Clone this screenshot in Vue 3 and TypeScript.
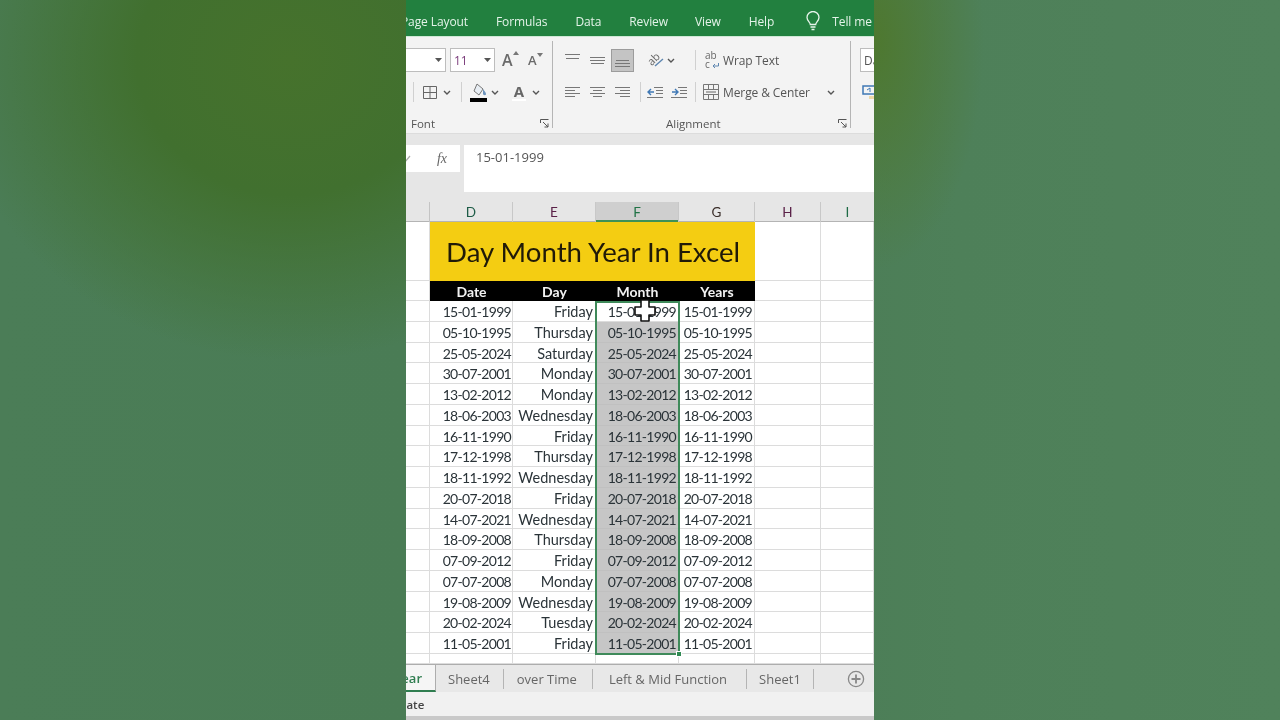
<script setup lang="ts">
interface Row { date: string; day: string }
const rows: Row[] = [
  { date: '15-01-1999', day: 'Friday' },
  { date: '05-10-1995', day: 'Thursday' },
  { date: '25-05-2024', day: 'Saturday' },
  { date: '30-07-2001', day: 'Monday' },
  { date: '13-02-2012', day: 'Monday' },
  { date: '18-06-2003', day: 'Wednesday' },
  { date: '16-11-1990', day: 'Friday' },
  { date: '17-12-1998', day: 'Thursday' },
  { date: '18-11-1992', day: 'Wednesday' },
  { date: '20-07-2018', day: 'Friday' },
  { date: '14-07-2021', day: 'Wednesday' },
  { date: '18-09-2008', day: 'Thursday' },
  { date: '07-09-2012', day: 'Friday' },
  { date: '07-07-2008', day: 'Monday' },
  { date: '19-08-2009', day: 'Wednesday' },
  { date: '20-02-2024', day: 'Tuesday' },
  { date: '11-05-2001', day: 'Friday' },
]
const tabs = ['Formulas', 'Data', 'Review', 'View', 'Help']
const cols = [
  { name: 'D', cls: 'hd' },
  { name: 'E', cls: 'he' },
  { name: 'F', cls: 'hf' },
  { name: 'G', cls: 'hg' },
  { name: 'H', cls: 'hh' },
  { name: 'I', cls: 'hi' },
]
</script>

<template>
  <div class="page">
    <div class="screen">
      <div class="tabs">
        <span class="tab first">Page Layout</span>
        <span v-for="t in tabs" :key="t" class="tab" :class="'tab-' + t">{{ t }}</span>
        <svg class="bulb" width="16" height="20" viewBox="0 0 16 20" fill="none" stroke="#e6f4ea" stroke-width="1.3">
          <path d="M5.3 13.5c0-2-3.3-3.6-3.3-7a6 6 0 0 1 12 0c0 3.4-3.3 5-3.3 7z" />
          <path d="M5.5 16h5M6.5 18.5h3" />
        </svg>
        <span class="tab tell">Tell me</span>
      </div>

      <div class="ribbon">
        <div class="group font-group">
          <div class="row">
            <div class="box fname"><svg class="caret" width="7" height="4" viewBox="0 0 7 4"><path d="M0 0h7L3.500 4z" fill="#555" /></svg></div>
            <div class="box fsize"><span class="sizeval">11</span><svg class="caret" width="7" height="4" viewBox="0 0 7 4"><path d="M0 0h7L3.500 4z" fill="#555" /></svg></div>
            <span class="grow-a">A<svg class="mini" width="6" height="4" viewBox="0 0 6 4"><path d="M0 4l3-4 3 4z" fill="#777" /></svg></span>
            <span class="shrink-a">A<svg class="mini" width="6" height="4" viewBox="0 0 6 4"><path d="M0 0h6L3 4z" fill="#777" /></svg></span>
          </div>
          <div class="row">
            <i class="vsep s1"></i>
            <svg class="borders" width="16" height="15" viewBox="0 0 16 15" fill="none" stroke="#666"><path d="M1.500 1.500h13v12h-13zM8 1.500v12M1.500 7.500h13" /></svg>
            <svg class="chev c1" width="8" height="5" viewBox="0 0 8 5" fill="none" stroke="#555" stroke-width="1.400"><path d="M1 1l3 3 3-3" /></svg>
            <i class="vsep s2"></i>
            <svg class="fill-ic" width="17" height="19" viewBox="0 0 17 19">
              <path d="M7 1l6 5-4 6-5-4z" fill="#e8eef4" stroke="#777" />
              <path d="M13 6c1 2 3 3 3 5s-3 1-3 0z" fill="#6d94bd" />
              <rect x="0" y="15" width="17" height="4" fill="#000" />
            </svg>
            <svg class="chev c2" width="8" height="5" viewBox="0 0 8 5" fill="none" stroke="#555" stroke-width="1.400"><path d="M1 1l3 3 3-3" /></svg>
            <span class="color-a">A</span>
            <svg class="chev c3" width="8" height="5" viewBox="0 0 8 5" fill="none" stroke="#555" stroke-width="1.400"><path d="M1 1l3 3 3-3" /></svg>
          </div>
          <div class="label">
            <span class="font-label">Font</span>
            <svg class="launch" width="9" height="9" viewBox="0 0 9 9" fill="none" stroke="#555"><path d="M.5 4V.5H8.500M3 3l5 5M8 4.500V8H4.500" /></svg>
          </div>
        </div>

        <div class="group align-group">
          <div class="row">
            <svg class="a1" width="15" height="15" viewBox="0 0 15 15" stroke="#777" fill="none"><path d="M0 1.500h15M1 5.500h13" /></svg>
            <svg class="a2" width="15" height="15" viewBox="0 0 15 15" stroke="#777" fill="none"><path d="M0 4.500h15M0 7.500h15M1 10.500h13" /></svg>
            <div class="pressed"><svg width="15" height="11" viewBox="0 0 15 11" stroke="#777" fill="none"><path d="M1 2.500h13M0 5.500h15M0 8.500h15" /></svg></div>
            <div class="orient">
              <span class="orient-text">ab</span>
              <svg class="orient-line" width="18" height="16" viewBox="0 0 18 16" fill="none"><path d="M9 14l8-7" stroke="#5e86b0" stroke-width="1.400" /></svg>
            </div>
            <svg class="chev c4" width="8" height="5" viewBox="0 0 8 5" fill="none" stroke="#555" stroke-width="1.400"><path d="M1 1l3 3 3-3" /></svg>
            <i class="vsep s3"></i>
            <span class="wrap-ic"><span class="wrap-line">ab</span><span class="wrap-line">c</span>
              <svg class="wrap-arrow" width="7" height="5" viewBox="0 0 7 5" fill="none" stroke="#5e86b0"><path d="M6.500 0v3H1M3 1L1 3l2 2" /></svg>
            </span>
            <span class="rib-text wt">Wrap Text</span>
          </div>
          <div class="row">
            <svg class="a1" width="15" height="13" viewBox="0 0 15 13" stroke="#777" fill="none"><path d="M0 1.500h15M0 4.500h10M0 7.500h15M0 10.500h10" /></svg>
            <svg class="a2" width="15" height="13" viewBox="0 0 15 13" stroke="#777" fill="none"><path d="M0 1.500h15M3 4.500h9M0 7.500h15M3 10.500h9" /></svg>
            <svg class="a3" width="15" height="13" viewBox="0 0 15 13" stroke="#777" fill="none"><path d="M0 1.500h15M5 4.500h10M0 7.500h15M5 10.500h10" /></svg>
            <i class="vsep s4"></i>
            <svg class="ind1" width="16" height="13" viewBox="0 0 16 13" fill="none">
              <path d="M7 1.500h9M9 4.500h7M9 7.500h7M0 11.500h16" stroke="#777" />
              <path d="M7 6H1M4 3L1 6l3 3" stroke="#3f78b5" stroke-width="1.400" />
            </svg>
            <svg class="ind2" width="16" height="13" viewBox="0 0 16 13" fill="none">
              <path d="M7 1.500h9M9 4.500h7M9 7.500h7M0 11.500h16" stroke="#777" />
              <path d="M1 6h6M4 3l3 3-3 3" stroke="#3f78b5" stroke-width="1.400" />
            </svg>
            <i class="vsep s5"></i>
            <svg class="merge" width="16" height="16" viewBox="0 0 16 16" fill="none" stroke="#777"><path d="M.5.500h15v15H.5zM.5 5.500h15M.5 10.500h15M5.500.500v5M10.500.500v5M5.500 10.500v5M10.500 10.500v5" /><path d="M3 8h10" stroke="#666" /></svg>
            <span class="rib-text mc">Merge &amp; Center</span>
            <svg class="chev c5" width="8" height="5" viewBox="0 0 8 5" fill="none" stroke="#555" stroke-width="1.400"><path d="M1 1l3 3 3-3" /></svg>
          </div>
          <div class="label">
            <span class="align-label">Alignment</span>
            <svg class="launch" width="9" height="9" viewBox="0 0 9 9" fill="none" stroke="#555"><path d="M.5 4V.5H8.500M3 3l5 5M8 4.500V8H4.500" /></svg>
          </div>
        </div>

        <div class="group next-group">
          <div class="row"><div class="box nbox">Da</div></div>
          <div class="row">
            <svg class="cond" width="14" height="16" viewBox="0 0 14 16" fill="none">
              <rect x="1" y="2" width="13" height="8" stroke="#3f78b5" stroke-width="1.500" />
              <path d="M5 6l3-2v4" stroke="#3f78b5" />
              <rect x="7" y="12" width="7" height="3" fill="#ecd9a8" />
            </svg>
          </div>
        </div>
      </div>

      <div class="formula">
        <div class="namebox">
          <svg width="5" height="8" viewBox="0 0 5 8" fill="none" stroke="#aaa" stroke-width="1.200"><path d="M-3 5l2 2 5-6" /></svg>
          <span class="fx">fx</span>
        </div>
        <div class="finput">15-01-1999</div>
      </div>

      <div class="colhead">
        <div class="corner"></div>
        <div v-for="c in cols" :key="c.name" class="hcell" :class="c.cls">{{ c.name }}</div>
      </div>

      <div class="grid">
        <div class="cell"></div>
        <div class="title">Day Month Year In Excel</div>
        <div class="cell"></div>
        <div class="cell"></div>

        <div class="cell"></div>
        <div class="th">Date</div>
        <div class="th">Day</div>
        <div class="th">Month</div>
        <div class="th">Years</div>
        <div class="cell"></div>
        <div class="cell"></div>

        <template v-for="(r, i) in rows" :key="r.date + i">
          <div class="cell"></div>
          <div class="cell num date">{{ r.date }}</div>
          <div class="cell num">{{ r.day }}</div>
          <div class="cell num date wide" :class="{ sel: i > 0 }">{{ r.date }}</div>
          <div class="cell num date wide">{{ r.date }}</div>
          <div class="cell"></div>
          <div class="cell"></div>
        </template>

        <div class="cell" v-for="n in 7" :key="'e' + n"></div>

        <div class="selection"><i class="handle"></i></div>
        <svg class="cursor" width="22" height="23" viewBox="0 0 22 23">
          <path d="M7 1h8v7h6v8h-6v6H7v-6H1V8h6z" fill="#fff" stroke="#111" stroke-width="1.600" stroke-linejoin="round" />
        </svg>
      </div>

      <div class="sheets">
        <div class="active-tab">Year</div>
        <span class="st st1">Sheet4</span><i class="tsep t1"></i>
        <span class="st st2">over Time</span><i class="tsep t2"></i>
        <span class="st st3">Left &amp; Mid Function</span><i class="tsep t3"></i>
        <span class="st st4">Sheet1</span><i class="tsep t4"></i>
        <svg class="plus" width="18" height="18" viewBox="0 0 18 18" fill="none" stroke="#888"><circle cx="9" cy="9" r="7.600" stroke-width="1.300" /><path d="M9 4.500v9M4.500 9h9" stroke-width="1.800" /></svg>
      </div>

      <div class="status"><span class="status-text">Date</span></div>
      <div class="foot"></div>
    </div>
  </div>
</template>

<style scoped>
.page {
  width: 1280px;
  height: 720px;
  display: flex;
  justify-content: center;
  overflow: hidden;
  background:
    radial-gradient(ellipse 340px 300px at 290px 60px, #46722c 0%, #41702f 45%, rgba(70, 118, 70, 0) 100%),
    radial-gradient(ellipse 110px 230px at 874px 40px, #4e782f 0%, rgba(78, 128, 88, 0) 100%),
    linear-gradient(90deg, #4b7d57 0%, #4a7c55 32%, #497a54 50%, #4e8059 75%, #50825b 100%);
}
.screen {
  width: 468px;
  height: 720px;
  display: flex;
  flex-direction: column;
  overflow: hidden;
  background: #fff;
  font-family: "Open Sans", "Noto Sans", sans-serif;
  filter: blur(0.4px);
}
.tabs {
  height: 37px;
  flex: none;
  box-sizing: border-box;
  background: #22803f;
  display: flex;
  align-items: center;
  gap: 28px;
  padding-top: 6px;
  color: #e4f3e9;
  font-size: 12px;
  letter-spacing: -0.1px;
  white-space: nowrap;
  border-bottom: 1px solid #cfe8d6;
}
.tab.first { margin-left: -5px; }
.tab-View { margin-left: -1px; }
.bulb { margin-left: 3px; }
.tab.tell { margin-left: -17px; }

.ribbon {
  height: 96px;
  flex: none;
  background: #f3f3f3;
  display: flex;
  padding-top: 4px;
  box-sizing: border-box;
  color: #555;
}
.group { height: 87px; flex: none; box-sizing: border-box; }
.font-group { width: 147px; border-right: 1px solid #b5b5b5; }
.align-group { width: 298px; border-right: 1px solid #b5b5b5; }
.next-group { width: 30px; }
.row { height: 32px; display: flex; align-items: center; position: relative; top: 3px; }
.label {
  display: flex;
  align-items: center;
  height: 14px;
  margin-top: 11px;
  font-size: 11.500px;
  color: #555;
}
.launch { margin-left: auto; margin-right: 3px; }
.font-label { margin-left: 5px; }
.align-label { margin-left: 113px; }

.box {
  height: 24px;
  box-sizing: border-box;
  background: #fff;
  border: 1px solid #bdbdbd;
  display: flex;
  align-items: center;
  font-size: 12px;
}
.caret { margin-left: auto; margin-right: 3px; }
.fname { width: 44px; margin-left: -4px; }
.fsize { width: 45px; margin-left: 4px; padding-left: 3px; }
.sizeval { color: #7a3a7a; }
.grow-a, .shrink-a {
  display: flex;
  align-items: flex-start;
  color: #6a6a6a;
  font-weight: 600;
  line-height: 1;
}
.grow-a { font-size: 16px; margin-left: 7px; width: 18px; }
.shrink-a { font-size: 13px; margin-left: 8px; width: 15px; }
.mini { margin-top: -1px; }
.vsep { display: block; width: 1px; height: 20px; background: #d0d0d0; flex: none; }
.s1 { margin-left: 7px; }
.borders { margin-left: 8px; }
.c1 { margin-left: 5px; }
.s2 { margin-left: 10px; }
.fill-ic { margin-left: 8px; }
.c2 { margin-left: 4px; }
.color-a {
  margin-left: 13px;
  width: 14px;
  font-size: 15px;
  font-weight: 700;
  color: #666;
  text-align: center;
  line-height: 1;
  border-bottom: 2px solid #fff;
}
.c3 { margin-left: 6px; }

.a1 { margin-left: 12px; flex: none; }
.a2 { margin-left: 10px; flex: none; }
.a3 { margin-left: 10px; flex: none; }
.pressed {
  width: 23px;
  height: 23px;
  margin-left: 6px;
  box-sizing: border-box;
  background: #c4c4c4;
  border: 1px solid #9c9c9c;
  display: flex;
  align-items: flex-end;
  justify-content: center;
  padding-bottom: 2px;
}
.orient {
  position: relative;
  margin-left: 12px;
  width: 18px;
  height: 16px;
  display: flex;
  align-items: center;
  justify-content: center;
}
.orient-text {
  font-size: 11px;
  line-height: 12px;
  color: #666;
  transform: translate(-2px, -1px) rotate(-45deg);
}
.orient-line { position: absolute; left: 0; top: 0; }
.c4 { margin-left: 3px; }
.s3 { margin-left: 20px; }
.wrap-ic {
  position: relative;
  margin-left: 9px;
  width: 14px;
  font-size: 10px;
  color: #666;
  display: flex;
  flex-direction: column;
}
.wrap-line { display: block; height: 9px; line-height: 9px; }
.wrap-arrow { position: absolute; right: 0; bottom: 1px; }
.rib-text { font-size: 12px; letter-spacing: -0.1px; color: #555; margin-left: 4px; white-space: nowrap; }
.s4 { margin-left: 10px; }
.ind1 { margin-left: 6px; }
.ind2 { margin-left: 8px; }
.s5 { margin-left: 8px; }
.merge { margin-left: 7px; flex: none; }
.c5 { margin-left: 17px; }
.nbox { margin-left: 9px; width: 40px; padding-left: 3px; }
.cond { margin-left: 11px; }

.formula {
  height: 69px;
  flex: none;
  box-sizing: border-box;
  background: #e6e6e6;
  padding-top: 11px;
  display: flex;
  align-items: flex-start;
  gap: 4px;
  border-top: 1px solid #dcdcdc;
}
.namebox {
  width: 54px;
  height: 27px;
  background: #fff;
  display: flex;
  align-items: center;
  justify-content: space-between;
  padding-right: 13px;
  box-sizing: border-box;
}
.fx {
  font-family: "Liberation Serif", serif;
  font-style: italic;
  font-size: 14px;
  color: #666;
}
.finput {
  flex: 1;
  height: 47px;
  background: #fff;
  box-sizing: border-box;
  padding: 3px 0 0 12px;
  font-size: 13px;
  color: #555;
}

.colhead {
  height: 20px;
  flex: none;
  background: #e6e6e6;
  display: grid;
  grid-template-columns: 24px 83px 83px 83px 76px 66px 53px;
  box-sizing: border-box;
  border-bottom: 1px solid #b4b4b4;
}
.corner { border-right: 1px solid #c4c4c4; }
.hcell {
  text-align: center;
  font-family: Lato, "Liberation Sans", sans-serif;
  font-size: 13.500px;
  line-height: 20px;
  border-right: 1px solid #c8c8c8;
}
.hd { color: #1e5c47; }
.he { color: #5a2148; }
.hf { color: #217346; background: #cfcfcf; box-shadow: inset 0 -2px 0 #3f9156; }
.hg { color: #3a2e2a; }
.hh { color: #5a2148; }
.hi { color: #1e6b45; border-right: 0; }

.grid {
  position: relative;
  height: 442px;
  flex: none;
  display: grid;
  grid-template-columns: 24px 83px 83px 83px 76px 66px 53px;
  grid-template-rows: 59px 20px repeat(17, 20.750px) 1fr;
  font-family: Lato, "Liberation Sans", sans-serif;
  background: #fff;
}
.cell {
  box-sizing: border-box;
  border-right: 1px solid #dcdcdc;
  border-bottom: 1px solid #dcdcdc;
  min-width: 0;
}
.title {
  grid-column: span 4;
  background: #f4cd12;
  color: #201a08;
  font-size: 27.600px;
  display: flex;
  align-items: center;
  justify-content: center;
  padding-left: 1px;
}
.th {
  background: #000;
  color: #f2f2f2;
  font-weight: 700;
  font-size: 14px;
  text-align: center;
  line-height: 22px;
}
.num {
  font-size: 14.500px;
  line-height: 22px;
  text-align: right;
  padding-right: 2px;
  color: #2a3338;
  white-space: nowrap;
  overflow: hidden;
}
.date { font-size: 14px; letter-spacing: -0.7px; padding-right: 1px; }
.date.wide { padding-right: 2px; }
.sel { background: #c6c6c6; border-bottom-color: #c0c0c0; }
.selection {
  position: absolute;
  left: 189px;
  top: 79px;
  width: 85px;
  height: 354px;
  box-sizing: border-box;
  border: 2px solid #3f8a5a;
}
.handle {
  position: absolute;
  right: -4px;
  bottom: -4px;
  width: 6px;
  height: 6px;
  background: #2f8a52;
  border: 1px solid #fff;
  box-sizing: border-box;
}
.cursor { position: absolute; left: 228px; top: 77px; }

.sheets {
  height: 28px;
  flex: none;
  background: #e8e8e8;
  border-top: 1px solid #adadad;
  box-sizing: border-box;
  display: flex;
  align-items: center;
  font-size: 13px;
  color: #666;
  white-space: nowrap;
}
.active-tab {
  width: 30px;
  height: 100%;
  box-sizing: border-box;
  background: #f5f5f5;
  border-right: 1px solid #adadad;
  border-bottom: 2px solid #2f7d50;
  color: #2f7d50;
  font-weight: 600;
  display: flex;
  justify-content: flex-end;
  align-items: center;
  padding-right: 13px;
  flex: none;
}
.st1 { margin-left: 12px; }
.tsep { display: block; width: 1px; height: 20px; background: #b4b4b4; flex: none; }
.t1 { margin-left: 13px; }
.st2 { margin-left: 13px; }
.t2 { margin-left: 15px; }
.st3 { margin-left: 16px; }
.t3 { margin-left: 19px; }
.st4 { margin-left: 12px; }
.t4 { margin-left: 12px; }
.plus { margin-left: 33px; }
.status {
  height: 24px;
  flex: none;
  background: #f1f1f1;
  display: flex;
  align-items: center;
  font-size: 11.500px;
  font-weight: 600;
  color: #444;
}
.status-text { margin-left: -8px; }
.foot { flex: 1; background: #c9c9c9; }
</style>
